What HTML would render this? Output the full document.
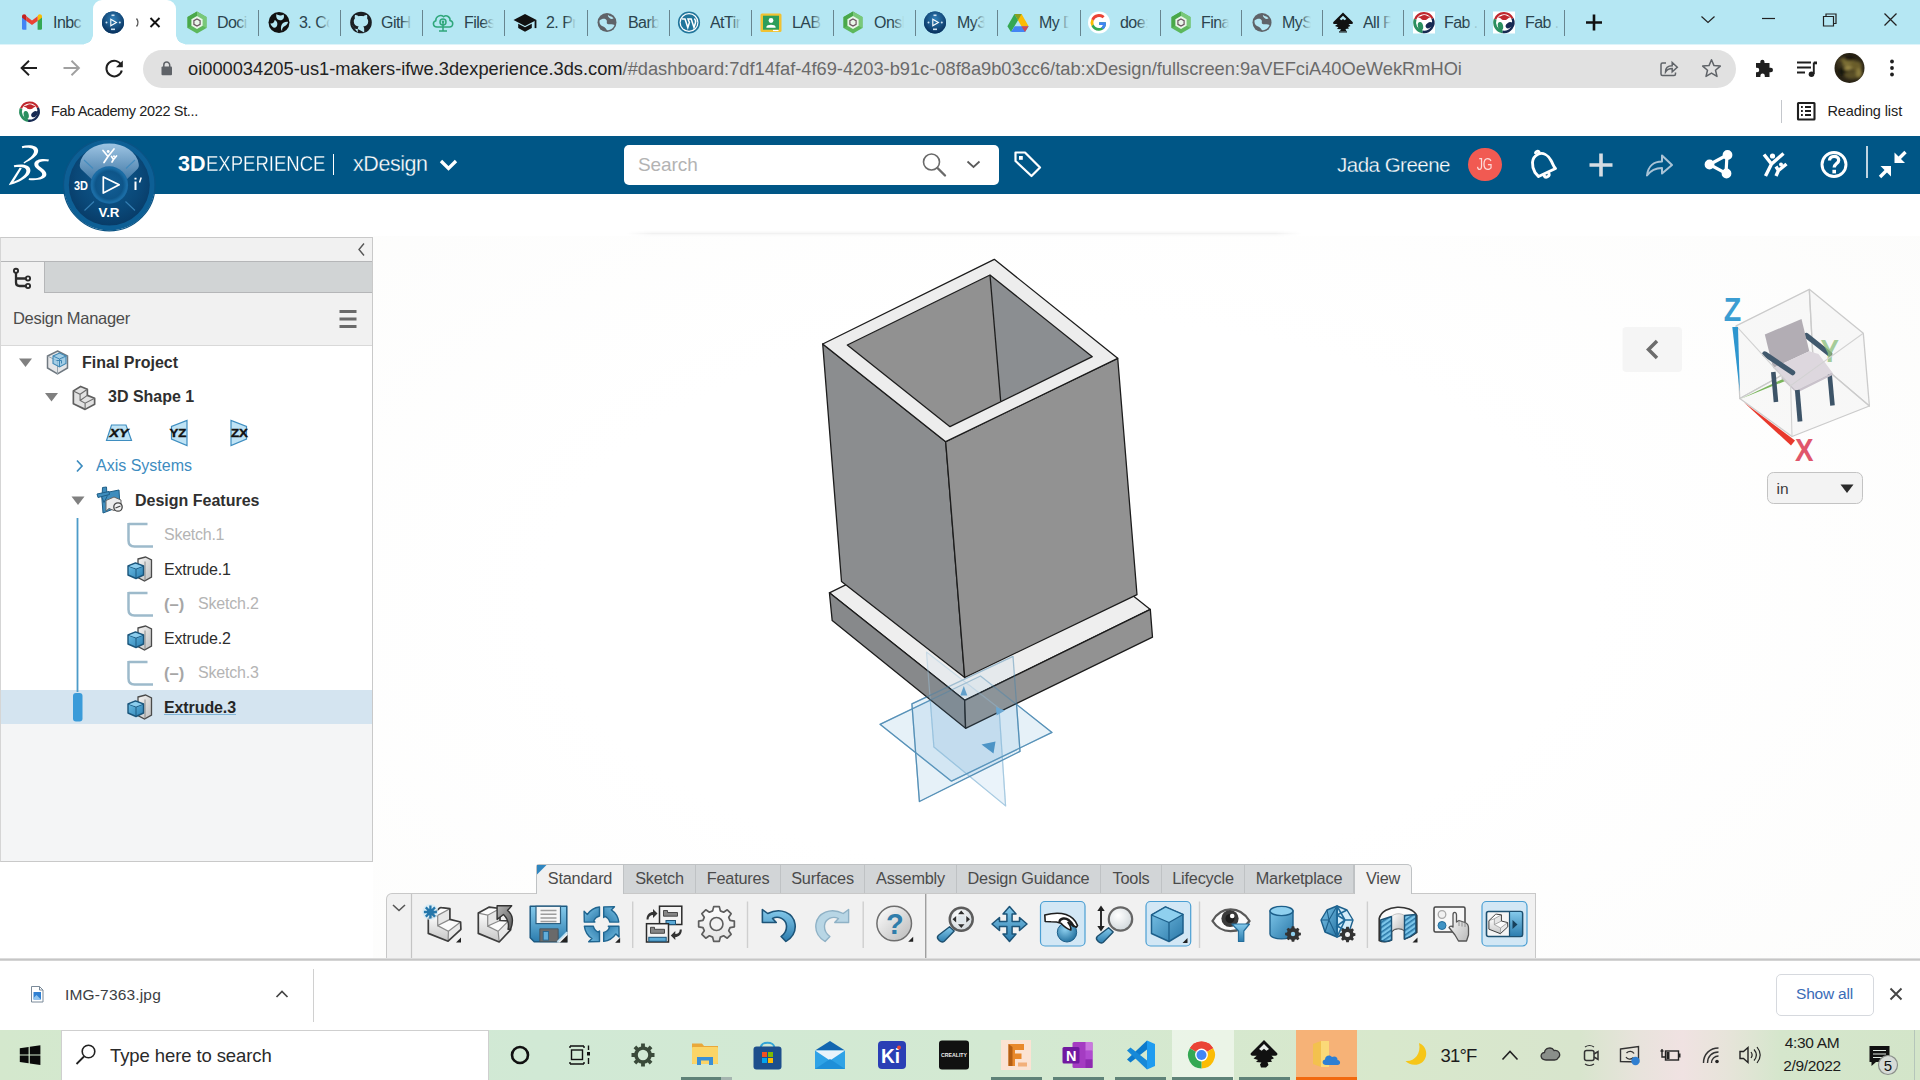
<!DOCTYPE html>
<html>
<head>
<meta charset="utf-8">
<title>3DEXPERIENCE xDesign</title>
<style>
*{box-sizing:border-box;margin:0;padding:0}
html,body{width:1920px;height:1080px;overflow:hidden;background:#fff;font-family:"Liberation Sans",sans-serif;}
body{position:relative}
.abs{position:absolute}
svg{position:absolute;overflow:visible}
/* ---------- chrome tab strip ---------- */
#tabstrip{position:absolute;left:0;top:0;width:1920px;height:44px;background:#b5e7f3}
#activetab{position:absolute;left:93px;top:0;width:83px;height:44px;background:#fff;border-radius:9px 9px 0 0}
#activetab:before,#activetab:after{content:"";position:absolute;bottom:0;width:9px;height:9px}
#activetab:before{left:-9px;background:radial-gradient(circle at 0 0,rgba(255,255,255,0) 8.5px,#fff 9px)}
#activetab:after{right:-9px;background:radial-gradient(circle at 100% 0,rgba(255,255,255,0) 8.5px,#fff 9px)}
.tabt{position:absolute;top:12.5px;height:20px;font-size:16px;line-height:20px;color:#2b444e;white-space:nowrap;overflow:hidden;letter-spacing:-0.55px}
.tabt i{position:absolute;right:0;top:0;width:11px;height:20px;background:linear-gradient(90deg,rgba(180,227,241,0),#b5e7f3)}
.tsep{position:absolute;top:10px;width:1px;height:26px;background:#67858f}
/* ---------- chrome toolbar ---------- */
#toolbar{position:absolute;left:0;top:44px;width:1920px;height:48px;background:#fff}
#omni{position:absolute;left:143px;top:50px;width:1593px;height:38px;border-radius:19px;background:#e1e1e1}
#url{position:absolute;left:188px;top:56px;height:26px;line-height:26px;font-size:18.27px;color:#222;white-space:nowrap;transform-origin:0 50%}
#url span{color:#6a6a6a}
#bookbar{position:absolute;left:0;top:92px;width:1920px;height:44px;background:#fff}
.bm{position:absolute;font-size:14.5px;color:#222;white-space:nowrap;transform-origin:0 50%}
/* ---------- 3DEXPERIENCE header ---------- */
#hdr{position:absolute;left:0;top:136px;width:1920px;height:58px;background:#005686}
#brand{position:absolute;left:178px;top:150px;font-size:21.5px;line-height:28px;color:#fff;white-space:nowrap;transform-origin:0 50%}
#brand b{font-weight:bold}
#searchbox{position:absolute;left:624px;top:145px;width:375px;height:40px;border-radius:5px;background:#fff}
#searchbox span{position:absolute;left:14px;top:8px;font-size:19px;line-height:24px;color:#b3b3b3;letter-spacing:-0.1px}
#uname{position:absolute;left:1337px;top:151px;font-size:20.5px;line-height:28px;color:#fff;white-space:nowrap;letter-spacing:-0.5px;-webkit-text-stroke:0.3px #005686;transform-origin:0 50%}
#avatar{position:absolute;left:1468px;top:147.500px;width:33.500px;height:33.500px;border-radius:17px;background:#f15a52;color:rgba(255,255,255,.78);font-size:17px;line-height:34px;text-align:center;letter-spacing:-0.3px}
#avatar span{display:inline-block;transform:scaleX(.74)}
/* ---------- left panel ---------- */
#panel{position:absolute;left:0;top:237px;width:373px;height:625px;border:1px solid #c9c9c9;border-left:1px solid #d5d5d5;background:#f4f5f6}
#pcollapse{position:absolute;left:0;top:0;width:371px;height:23px;background:#f1f1f1}
#ptabs{position:absolute;left:0;top:23px;width:371px;height:32px;background:#d1d4d5;border-top:1px solid #b5b6b8;border-bottom:1px solid #b5b6b8}
#ptab1{position:absolute;left:0;top:0;width:44px;height:31px;background:#f1f1f1;border-right:1px solid #b5b6b8}
#ptitle{position:absolute;left:0;top:55px;width:371px;height:53px;background:#f1f1f1;border-bottom:1px solid #d9d9d9}
#ptitle span{position:absolute;left:12px;top:14px;font-size:16.5px;line-height:22px;color:#4c4c4c;letter-spacing:-0.3px}
#tree{position:absolute;left:0;top:108px;width:371px;height:344px;background:#fff}
#selrow{position:absolute;left:0;top:452px;width:371px;height:34px;background:#d4e4f0}
.tl{position:absolute;font-size:16px;line-height:22px;white-space:nowrap;color:#2d2d2d;transform-origin:0 50%}
.tl.b{font-weight:bold;color:#2f2f2f}
.tl.g{color:#b4b4b4}
.tl.lnk{color:#3d8cbf}
/* ---------- bottom action bar ---------- */
#abar{position:absolute;left:386px;top:893px;width:1150px;height:66px;background:#f1f1f1;border:1px solid #c8c8c8;border-bottom:none;border-radius:6px 0 0 0}
.atab{position:absolute;top:864px;height:29px;background:#d2d5d7;border:1px solid #bfc2c4;border-bottom:none;border-left:none;font-size:16.3px;line-height:27px;color:#4b4b4b;text-align:center;letter-spacing:-0.2px;white-space:nowrap}
.atab.on{background:#f1f1f1;height:30px;border-left:1px solid #bfc2c4;z-index:2}
/* ---------- download bar ---------- */
#dlbar{position:absolute;left:0;top:958px;width:1920px;height:72px;background:linear-gradient(180deg,#dcdcdc 0,#dcdcdc 1px,#c6c6c6 1px,#c6c6c6 2px,#d4d4d4 2px,#d4d4d4 3px,#fff 3px)}
/* ---------- taskbar ---------- */
#taskbar{position:absolute;left:0;top:1030px;width:1920px;height:50px;background:linear-gradient(90deg,#d4e8cd 0,#d1e9d5 28%,#d3e9d2 52%,#d8e8cc 72%,#d8e5cd 82.3%,#e8e3dc 85.4%,#f0e2e2 87.6%,#e6e4d9 90.1%,#d5e6cc 92.7%,#d3e5c9 100%)}
#tsearch{position:absolute;left:61px;top:1030px;width:428px;height:50px;background:#fff;border:1px solid #cfcfcf;border-bottom:none}
#tsearch span{position:absolute;left:48px;top:13px;font-size:18.5px;line-height:24px;color:#2a2a2a;white-space:nowrap;letter-spacing:-0.1px}
.tk{position:absolute;font-size:16px;color:#1c1c1c;white-space:nowrap}
</style>
</head>
<body>
<div class="abs" style="left:0;top:44px;width:1920px;height:1px;background:rgba(181,231,243,.45);z-index:1"></div>
<div class="abs" style="left:84px;top:44px;width:101px;height:1px;background:#fff;z-index:1"></div>
<div id="tabstrip">
<div id="activetab"></div>
<div class="tabt" style="left:53px;width:31px">Inbc<i></i></div>
<div class="tabt" style="left:217px;width:31px">Doci<i></i></div>
<div class="tabt" style="left:299px;width:31px">3. Cc<i></i></div>
<div class="tabt" style="left:381px;width:31px">GitH<i></i></div>
<div class="tabt" style="left:464px;width:30px">Files<i></i></div>
<div class="tabt" style="left:546px;width:30px">2. Pr<i></i></div>
<div class="tabt" style="left:628px;width:31px">Barb<i></i></div>
<div class="tabt" style="left:710px;width:31px">AtTir<i></i></div>
<div class="tabt" style="left:792px;width:30px">LAB:<i></i></div>
<div class="tabt" style="left:874px;width:30px">Onsl<i></i></div>
<div class="tabt" style="left:957px;width:28px">My3<i></i></div>
<div class="tabt" style="left:1039px;width:30px">My D<i></i></div>
<div class="tabt" style="left:1120px;width:28px">doe:<i></i></div>
<div class="tabt" style="left:1201px;width:28px">Final<i></i></div>
<div class="tabt" style="left:1282px;width:29px">MyS<i></i></div>
<div class="tabt" style="left:1363px;width:28px">All P<i></i></div>
<div class="tabt" style="left:1444px;width:34px">Fab .<i></i></div>
<div class="tabt" style="left:1525px;width:34px">Fab .<i></i></div>
<div class="tsep" style="left:258px"></div>
<div class="tsep" style="left:340px"></div>
<div class="tsep" style="left:422px"></div>
<div class="tsep" style="left:504px"></div>
<div class="tsep" style="left:587px"></div>
<div class="tsep" style="left:669px"></div>
<div class="tsep" style="left:751px"></div>
<div class="tsep" style="left:833px"></div>
<div class="tsep" style="left:915px"></div>
<div class="tsep" style="left:997px"></div>
<div class="tsep" style="left:1080px"></div>
<div class="tsep" style="left:1160px"></div>
<div class="tsep" style="left:1241px"></div>
<div class="tsep" style="left:1322px"></div>
<div class="tsep" style="left:1403px"></div>
<div class="tsep" style="left:1484px"></div>
<div class="tsep" style="left:1564px"></div>
<svg width="1920" height="44" viewBox="0 0 1920 44" style="left:0;top:0"><defs><radialGradient id="cg" cx="50%" cy="35%" r="65%"><stop offset="0" stop-color="#2f7fb8"/><stop offset="1" stop-color="#08305c"/></radialGradient></defs>
<g transform="translate(22,14)"><svg x="0" y="0" width="20" height="16" viewBox="0 0 20 16"><path d="M0 2.2 V14.5 a1.3 1.3 0 0 0 1.3 1.3 H4.4 V6.2 Z" fill="#4285f4"/><path d="M20 2.2 V14.5 a1.3 1.3 0 0 1 -1.3 1.3 H15.6 V6.2 Z" fill="#34a853"/><path d="M15.6 2.3 L15.6 6.9 L20 3.6 V2.6 C20 0.5 17.8 -0.4 16.3 0.8 Z" fill="#fbbc04"/><path d="M4.4 6.9 V2.3 L10 6.5 L15.6 2.3 V6.9 L10 11.1 Z" fill="#ea4335"/><path d="M0 2.6 V3.6 L4.4 6.9 V2.3 L3.7 0.8 C2.2 -0.4 0 0.5 0 2.6 Z" fill="#c5221f"/></svg></g>
<g transform="translate(113,22.5)"><circle r="11" fill="#0a4f86"/><circle r="11" fill="url(#cg)"/><path d="M-2.2 -3.2 L3.4 0 L-2.2 3.2 Z" fill="none" stroke="#fff" stroke-width="1.1"/><circle cx="-6.5" cy="0" r="1" fill="#cfe3f2"/><circle cx="6.8" cy="0" r="1" fill="#cfe3f2"/><rect x="-2" y="6" width="4" height="1.6" fill="#cfe3f2"/><rect x="-1.5" y="-8" width="3" height="1.6" fill="#cfe3f2"/></g>
<g transform="translate(197,22.5)"><path d="M0 -11 L9.5 -5.5 V5.5 L0 11 L-9.5 5.5 V-5.5 Z" fill="#5cb85c"/><path d="M0 -11 L9.5 -5.5 V5.5 L5 3 V-3 L0 -6 Z" fill="#79c879"/><path d="M-9.5 -5.5 L0 -11 L0 -6 L-5 -3 V3 L-9.5 5.5 Z" fill="#4aa84a"/><path d="M0 -6.5 L5.6 -3.2 V3.2 L0 6.5 L-5.6 3.2 V-3.2 Z" fill="#e9f6ea"/><path d="M0 -3.6 L3.1 -1.8 V1.8 L0 3.6 L-3.1 1.8 V-1.8 Z" fill="#e9f6ea" stroke="#6b5560" stroke-width="1.2"/></g>
<g transform="translate(279,22.5)"><circle r="10.5" fill="#111"/><path d="M-2.5 -8.5 C0 -6.5 2.5 -7 4.5 -8 C6 -5 4 -2 1 -2.2 C-1.5 -2.4 -3.5 -5 -2.5 -8.5Z" fill="#b5e7f3"/><path d="M-8.7 1 C-6 1.5 -4.6 -0.5 -4.3 -2.6 C-1.5 -1.5 -0.8 2 -2.6 4.2 C-4.3 6.2 -7.2 5 -8.7 1Z" fill="#b5e7f3"/><path d="M3.2 8.6 C2.6 6 4 4.4 6 3.4 C7.6 2.6 8.8 1 9 -0.6 C6 -1 3 0.6 2.2 3.4 C1.6 5.4 2 7.4 3.2 8.6Z" fill="#b5e7f3"/></g>
<g transform="translate(361,22.5)"><circle r="10.8" fill="#1b1f23"/><path d="M-3.2 10 V6.4 C-6.5 7.2 -7.2 4.8 -7.2 4.8 C-7.8 3.4 -8.6 3 -8.6 3 M-3.2 6.4 C-3.2 5 -2.6 4.4 -2.2 4 C-5.4 3.6 -7.2 2.2 -7.2 -1 C-7.2 -2.4 -6.8 -3.4 -6 -4.2 C-6.2 -4.6 -6.6 -5.8 -5.9 -7.4 C-5.9 -7.4 -4.7 -7.8 -2.4 -6.2 C-0.8 -6.6 0.8 -6.6 2.4 -6.2 C4.7 -7.8 5.9 -7.4 5.9 -7.4 C6.6 -5.8 6.2 -4.6 6 -4.2 C6.8 -3.4 7.2 -2.4 7.2 -1 C7.2 2.2 5.4 3.6 2.2 4 C2.8 4.5 3.2 5.4 3.2 6.6 V10 Z" fill="#b5e7f3"/></g>
<g transform="translate(443,22.5)" fill="none" stroke="#2fa77b" stroke-width="1.5"><path d="M-6 4.5 C-10 4.5 -11 -0.5 -7.2 -1.8 C-7.5 -6 -2.5 -8.5 0.6 -5.8 C3.5 -8 7.6 -5.4 7 -2 C11 -1.2 10.5 4.5 6.5 4.5 Z"/><circle cx="0" cy="-0.5" r="3" /><path d="M0 -0.5 V4.5 M0 4.5 V8 M-4 8.5 H4" /><circle cx="0" cy="-0.8" r="1.3" fill="#2fa77b" stroke="none"/></g>
<g transform="translate(525,22.5)" fill="#111"><path d="M0 -8.5 L11.5 -2.6 L0 3.4 L-11.5 -2.6 Z"/><path d="M-6.8 1.2 V5.6 L0 9.2 L6.8 5.6 V1.2 L0 4.8 Z"/><rect x="9.6" y="-2.4" width="1.8" height="8"/></g>
<g transform="translate(607,22.5)"><circle r="9.5" fill="#5f6368"/><path d="M-7.5 -2 C-5 -4 -2 -4.5 -0.5 -2.5 C0.5 -1 -1 0.5 0.5 1.5 C2.5 2.5 5 1 7.5 2.5 C6.5 6 3 7.8 0 7.8 C-1.5 5 -3.5 4 -5 3.5 C-7 2.5 -7.8 0 -7.5 -2 Z" fill="#b5e7f3"/><path d="M1 -7.6 C3 -6 5.5 -6.5 6.5 -4 C5 -3.2 3.5 -3.5 2.5 -4.5 C1.5 -5.5 0.5 -6.5 1 -7.6Z" fill="#b5e7f3"/></g>
<g transform="translate(689,22.5)"><circle r="10.3" fill="#fff" stroke="#21759b" stroke-width="1.6"/><circle r="8.3" fill="#21759b"/><path d="M-7 -3.5 H-4 L-1.2 5 L0.4 0 L-1 -3.5 H2.2 L5 5 L6.4 0.5 C7 -1.5 6.2 -3 5.4 -4" fill="none" stroke="#fff" stroke-width="1.5"/></g>
<g transform="translate(771,22.5)"><rect x="-10.5" y="-9" width="21" height="18.5" rx="1.5" fill="#f1c232"/><rect x="-8" y="-6.8" width="16" height="14" fill="#2e9e5a"/><circle cx="0" cy="-2" r="2.4" fill="#fff"/><path d="M-4.6 4.6 C-4.6 1.6 4.6 1.6 4.6 4.6 V5.2 H-4.6Z" fill="#fff"/><rect x="2" y="7.4" width="5.5" height="1.2" fill="#fff"/></g>
<g transform="translate(853,22.5)"><path d="M0 -11 L9.5 -5.5 V5.5 L0 11 L-9.5 5.5 V-5.5 Z" fill="#5cb85c"/><path d="M0 -11 L9.5 -5.5 V5.5 L5 3 V-3 L0 -6 Z" fill="#79c879"/><path d="M-9.5 -5.5 L0 -11 L0 -6 L-5 -3 V3 L-9.5 5.5 Z" fill="#4aa84a"/><path d="M0 -6.5 L5.6 -3.2 V3.2 L0 6.5 L-5.6 3.2 V-3.2 Z" fill="#e9f6ea"/><path d="M0 -3.6 L3.1 -1.8 V1.8 L0 3.6 L-3.1 1.8 V-1.8 Z" fill="#e9f6ea" stroke="#6b5560" stroke-width="1.2"/></g>
<g transform="translate(935,22.5)"><circle r="11" fill="#0a4f86"/><circle r="11" fill="url(#cg)"/><path d="M-2.2 -3.2 L3.4 0 L-2.2 3.2 Z" fill="none" stroke="#fff" stroke-width="1.1"/><circle cx="-6.5" cy="0" r="1" fill="#cfe3f2"/><circle cx="6.8" cy="0" r="1" fill="#cfe3f2"/><rect x="-2" y="6" width="4" height="1.6" fill="#cfe3f2"/><rect x="-1.5" y="-8" width="3" height="1.6" fill="#cfe3f2"/></g>
<g transform="translate(1018,23)"><path d="M-3.6 -9 H3.6 L10.6 3.2 H3.4 Z" fill="#fbbc04"/><path d="M-3.6 -9 L0 -2.8 L-7 9 L-10.6 3.2 Z" fill="#34a853"/><path d="M-7 9 L-3.4 3.2 H10.6 L7 9 Z" fill="#4285f4"/><path d="M3.4 3.2 H10.6 L7 9Z" fill="#ea4335" opacity=".85"/><path d="M-3.6 -9 L0 -2.8 L3.6 -9Z" fill="#188038" opacity=".5"/></g>
<g transform="translate(1099,22.5)"><circle r="11" fill="#fff"/><path d="M6.8 -0.2 H0.2 V2.4 H4 C3.4 4.6 1.8 5.6 0 5.6 A5.6 5.6 0 0 1 -5.3 1.8 L-7.6 3.5 A8.2 8.2 0 0 0 0 8.2 C4.6 8.2 7.6 4.8 6.8 -0.2Z" fill="#34a853"/><path d="M6.8 -0.2 H0.2 V2.4 H4 C3.7 3.6 3 4.4 2.2 5 L4.4 6.8 C6.4 5 7.3 2.5 6.8 -0.2Z" fill="#4285f4"/><path d="M-5.3 1.8 A5.6 5.6 0 0 1 -5.3 -1.8 L-7.6 -3.5 A8.2 8.2 0 0 0 -7.6 3.5Z" fill="#fbbc04"/><path d="M-5.3 -1.8 A5.6 5.6 0 0 1 3.6 -4.2 L5.6 -6.2 A8.2 8.2 0 0 0 -7.6 -3.5Z" fill="#ea4335"/></g>
<g transform="translate(1181,22.5)"><path d="M0 -11 L9.5 -5.5 V5.5 L0 11 L-9.5 5.5 V-5.5 Z" fill="#5cb85c"/><path d="M0 -11 L9.5 -5.5 V5.5 L5 3 V-3 L0 -6 Z" fill="#79c879"/><path d="M-9.5 -5.5 L0 -11 L0 -6 L-5 -3 V3 L-9.5 5.5 Z" fill="#4aa84a"/><path d="M0 -6.5 L5.6 -3.2 V3.2 L0 6.5 L-5.6 3.2 V-3.2 Z" fill="#e9f6ea"/><path d="M0 -3.6 L3.1 -1.8 V1.8 L0 3.6 L-3.1 1.8 V-1.8 Z" fill="#e9f6ea" stroke="#6b5560" stroke-width="1.2"/></g>
<g transform="translate(1262,22.5)"><circle r="9.5" fill="#5f6368"/><path d="M-7.5 -2 C-5 -4 -2 -4.5 -0.5 -2.5 C0.5 -1 -1 0.5 0.5 1.5 C2.5 2.5 5 1 7.5 2.5 C6.5 6 3 7.8 0 7.8 C-1.5 5 -3.5 4 -5 3.5 C-7 2.5 -7.8 0 -7.5 -2 Z" fill="#b5e7f3"/><path d="M1 -7.6 C3 -6 5.5 -6.5 6.5 -4 C5 -3.2 3.5 -3.5 2.5 -4.5 C1.5 -5.5 0.5 -6.5 1 -7.6Z" fill="#b5e7f3"/></g>
<g transform="translate(1343,22.5)" fill="#111"><path d="M0 -10 L9.6 -0.5 C10.4 0.6 9.6 1.6 8.4 1.6 H5.5 L7.5 3.4 L5 4.6 L6 6 L2.5 6.6 L3.4 8.6 H-3 L-2 6.8 L-6 6.4 L-4.6 4.8 L-8 3.6 L-5.4 1.6 H-8.4 C-9.6 1.6 -10.4 0.6 -9.6 -0.5 Z"/><path d="M-3.4 -3.4 L0 -6.8 L3.4 -3.4 L1.6 -2.2 L0 -3.6 L-1.6 -2.2Z" fill="#b5e7f3"/><path d="M-4 9.4 H4" stroke="#111" stroke-width="1.2"/></g>
<g transform="translate(1424,22.5)"><rect x="-11" y="-11" width="22" height="22" fill="#fff"/><path d="M-8.83 -3.21 A9.4 9.4 0 0 1 8.52 -3.97" fill="none" stroke="#c0272d" stroke-width="2.200"/><path d="M8.52 -3.97 A9.4 9.4 0 0 1 -1.63 9.26" fill="none" stroke="#172a52" stroke-width="2.400"/><path d="M-1.63 9.26 A9.4 9.4 0 0 1 -8.83 -3.21" fill="none" stroke="#2a8f5f" stroke-width="2.800"/><ellipse cx="0.300" cy="-5" rx="3.400" ry="2.600" fill="#c0272d"/><path d="M-6.500 -5.500 L-2 -6.500 L-2 -3.500 Z M6.500 -5.500 L3 -6.500 L3 -3.500Z" fill="#c0272d"/><ellipse cx="-3.500" cy="3.600" rx="2.600" ry="4.200" transform="rotate(-12 -3.500 3.600)" fill="#2a8f5f"/><path d="M-3.500 6 L-1 9.300 L-4.500 8.800Z" fill="#2a8f5f"/><ellipse cx="5" cy="2.700" rx="3.700" ry="2.500" transform="rotate(-38 5 2.700)" fill="#172a52"/><path d="M7 0.500 L9.300 -2 L8.800 2Z" fill="#172a52"/></g>
<g transform="translate(1504,22.5)"><rect x="-11" y="-11" width="22" height="22" fill="#fff"/><path d="M-8.83 -3.21 A9.4 9.4 0 0 1 8.52 -3.97" fill="none" stroke="#c0272d" stroke-width="2.200"/><path d="M8.52 -3.97 A9.4 9.4 0 0 1 -1.63 9.26" fill="none" stroke="#172a52" stroke-width="2.400"/><path d="M-1.63 9.26 A9.4 9.4 0 0 1 -8.83 -3.21" fill="none" stroke="#2a8f5f" stroke-width="2.800"/><ellipse cx="0.300" cy="-5" rx="3.400" ry="2.600" fill="#c0272d"/><path d="M-6.500 -5.500 L-2 -6.500 L-2 -3.500 Z M6.500 -5.500 L3 -6.500 L3 -3.500Z" fill="#c0272d"/><ellipse cx="-3.500" cy="3.600" rx="2.600" ry="4.200" transform="rotate(-12 -3.500 3.600)" fill="#2a8f5f"/><path d="M-3.500 6 L-1 9.300 L-4.500 8.800Z" fill="#2a8f5f"/><ellipse cx="5" cy="2.700" rx="3.700" ry="2.500" transform="rotate(-38 5 2.700)" fill="#172a52"/><path d="M7 0.500 L9.300 -2 L8.800 2Z" fill="#172a52"/></g>
<path d="M136.5 18.5 Q139.5 22.5 136.5 26.5" fill="none" stroke="#555" stroke-width="1.3"/>
<path d="M150.5 18 L159.5 27 M159.5 18 L150.5 27" stroke="#111" stroke-width="1.9" fill="none"/>
<path d="M1586 22.5 H1602 M1594 14.5 V30.5" stroke="#111" stroke-width="2.6" fill="none"/>
<path d="M1701.5 16.5 L1708 22.5 L1714.5 16.5" stroke="#222" stroke-width="1.2" fill="none"/>
<path d="M1762 18.5 H1775" stroke="#222" stroke-width="1.2" fill="none"/>
<path d="M1823.5 16.5 H1833.5 V26 H1823.5 Z M1826 16.5 V14 H1836 V23.5 H1833.5" stroke="#222" stroke-width="1.2" fill="none"/>
<path d="M1884.500 13.5 L1896.5 25.5 M1896.5 13.5 L1884.5 25.5" stroke="#222" stroke-width="1.3" fill="none"/>
</svg></div>
<div id="toolbar"></div>
<div id="bookbar"></div>
<div id="omni"></div>
<div id="url">oi000034205-us1-makers-ifwe.3dexperience.3ds.com<span>/#dashboard:7df14faf-4f69-4203-b91c-08f8a9b03cc6/tab:xDesign/fullscreen:9aVEFciA40OeWekRmHOi</span></div>
<div class="bm" id="bm1" style="left:51px;top:101px;line-height:20px;letter-spacing:-0.36px">Fab Academy 2022 St...</div>
<div class="bm" id="bm2" style="left:1827.5px;top:101px;line-height:20px;letter-spacing:-0.1px">Reading list</div>
<svg width="1920" height="92" viewBox="0 44 1920 92" style="left:0;top:44px">
 <!-- back -->
 <path d="M37 68 H22 M29 60.8 L21.6 68 L29 75.2" fill="none" stroke="#1f1f1f" stroke-width="1.9"/>
 <!-- forward -->
 <path d="M63.500 68 H78.500 M71.500 60.800 L78.900 68 L71.500 75.200" fill="none" stroke="#a0a0a0" stroke-width="1.9"/>
 <!-- reload -->
 <path d="M121.3 65.200 A7.800 7.800 0 1 0 121.800 70.500" fill="none" stroke="#1f1f1f" stroke-width="2"/>
 <path d="M122.800 60.500 V67.300 H116 Z" fill="#1f1f1f"/>
 <!-- lock -->
 <rect x="161.500" y="66.500" width="10.500" height="8.800" rx="1" fill="#5f6368"/>
 <path d="M163.800 67 V65 A2.950 2.950 0 0 1 169.700 65 V67" fill="none" stroke="#5f6368" stroke-width="1.5"/>
 <!-- share -->
 <g fill="none" stroke="#5f6368" stroke-width="1.5">
  <path d="M1666 63 H1662.500 A1.500 1.500 0 0 0 1661 64.500 V74 A1.500 1.500 0 0 0 1662.500 75.500 H1674 A1.500 1.500 0 0 0 1675.500 74 V72.500"/>
  <path d="M1665.500 72 C1665.500 67.500 1668.500 65.800 1672.200 65.800 V62.500 L1677.300 67.200 L1672.200 71.800 V68.600 C1669.500 68.600 1667.200 69.300 1665.500 72 Z"/>
 </g>
 <!-- star -->
 <path d="M1711.500 59.800 L1714 65.600 L1720.300 66.100 L1715.500 70.200 L1717 76.400 L1711.500 73.100 L1706 76.400 L1707.500 70.200 L1702.700 66.100 L1709 65.600 Z" fill="none" stroke="#5f6368" stroke-width="1.5" stroke-linejoin="round"/>
 <!-- puzzle -->
 <path d="M1756 63 H1760.300 V61.800 A2.100 2.100 0 0 1 1764.500 61.800 V63 H1769.500 V67.800 H1770.800 A2.200 2.200 0 0 1 1770.800 72.200 H1769.500 V77 H1764.800 V75.800 A2.200 2.200 0 0 0 1760.400 75.800 V77 H1756 V72.300 H1757 A2.250 2.250 0 0 0 1757 67.800 H1756 Z" fill="#1f1f1f"/>
 <!-- media control -->
 <g fill="none" stroke="#1f1f1f" stroke-width="1.900">
  <path d="M1797 62.500 H1811 M1797 67.500 H1811 M1797 72.500 H1805"/>
  <path d="M1813.800 62.500 V74"/>
 </g>
 <circle cx="1811.500" cy="74.200" r="2.800" fill="#1f1f1f"/>
 <path d="M1813.800 61.500 H1817 V64.300 H1813.800Z" fill="#1f1f1f"/>
 <!-- avatar -->
 <defs><clipPath id="avc"><circle cx="1849.500" cy="68" r="15"/></clipPath><filter id="avb" x="-20%" y="-20%" width="140%" height="140%"><feGaussianBlur stdDeviation="1.600"/></filter></defs>
 <circle cx="1849.500" cy="68" r="15" fill="#2a2416"/>
 <g clip-path="url(#avc)" filter="url(#avb)">
  <ellipse cx="1846" cy="62" rx="9" ry="4" fill="#7d6f35"/>
  <ellipse cx="1856" cy="66" rx="6" ry="5" fill="#6a5d2c"/>
  <ellipse cx="1843" cy="72" rx="5" ry="4" fill="#14120c"/>
  <ellipse cx="1852" cy="75" rx="8" ry="4" fill="#5a4f27"/>
  <ellipse cx="1850" cy="58" rx="6" ry="3" fill="#1b180f"/>
  <ellipse cx="1859" cy="73" rx="3" ry="5" fill="#8a7b3c"/>
  <ellipse cx="1848" cy="68" rx="4" ry="2" fill="#a08f4a"/>
  <ellipse cx="1840" cy="64" rx="3" ry="4" fill="#3a331c"/>
 </g>
 <!-- menu dots -->
 <circle cx="1892" cy="61.500" r="1.900" fill="#1f1f1f"/><circle cx="1892" cy="68" r="1.900" fill="#1f1f1f"/><circle cx="1892" cy="74.500" r="1.900" fill="#1f1f1f"/>
 <!-- bookmark fab icon -->
 <g transform="translate(29.600,111.600) scale(.970)"><circle r="10" fill="#fff"/><path d="M-8.83 -3.21 A9.4 9.4 0 0 1 8.52 -3.97" fill="none" stroke="#c0272d" stroke-width="2.200"/><path d="M8.52 -3.97 A9.4 9.4 0 0 1 -1.63 9.26" fill="none" stroke="#172a52" stroke-width="2.400"/><path d="M-1.63 9.26 A9.4 9.4 0 0 1 -8.83 -3.21" fill="none" stroke="#2a8f5f" stroke-width="2.800"/><ellipse cx="0.300" cy="-5" rx="3.400" ry="2.600" fill="#c0272d"/><path d="M-6.500 -5.500 L-2 -6.500 L-2 -3.500 Z M6.500 -5.500 L3 -6.500 L3 -3.500Z" fill="#c0272d"/><ellipse cx="-3.500" cy="3.600" rx="2.600" ry="4.200" transform="rotate(-12 -3.500 3.600)" fill="#2a8f5f"/><path d="M-3.500 6 L-1 9.300 L-4.500 8.800Z" fill="#2a8f5f"/><ellipse cx="5" cy="2.700" rx="3.700" ry="2.500" transform="rotate(-38 5 2.700)" fill="#172a52"/><path d="M7 0.500 L9.300 -2 L8.800 2Z" fill="#172a52"/></g>
 <!-- reading list -->
 <path d="M1781.500 100 V123" stroke="#c4c7cc" stroke-width="1"/>
 <rect x="1798" y="103" width="16.500" height="16.500" rx=".5" fill="none" stroke="#1f1f1f" stroke-width="2.100"/>
 <path d="M1801 107 H1802.800 M1805 107 H1811 M1801 111 H1802.800 M1805 111 H1811 M1801 115 H1802.800 M1805 115 H1811" stroke="#1f1f1f" stroke-width="2"/>
</svg>

<div class="abs" style="left:0;top:194px;width:1920px;height:766px;background:#fff"></div>
<div class="abs" style="left:373px;top:236px;width:1547px;height:722px;background:radial-gradient(ellipse 75% 85% at 45% 50%,#ffffff 45%,#fcfcfb 100%)"></div>
<div class="abs" style="left:625px;top:230px;width:678px;height:7px;background:linear-gradient(90deg,rgba(0,0,0,0),rgba(0,0,0,1) 4%,rgba(0,0,0,1) 96%,rgba(0,0,0,0));opacity:.05;-webkit-mask-image:linear-gradient(180deg,rgba(0,0,0,0),rgba(0,0,0,.5) 35%,#000 50%,rgba(0,0,0,.5) 65%,rgba(0,0,0,0));mask-image:linear-gradient(180deg,rgba(0,0,0,0),rgba(0,0,0,.5) 35%,#000 50%,rgba(0,0,0,.5) 65%,rgba(0,0,0,0))"></div>
<svg width="1547" height="764" viewBox="373 194 1547 764" style="left:373px;top:194px">
 <defs><g id="rplanes" stroke-linejoin="round">
  <path d="M926.500 652 L999 708.300 L1005.600 805.900 L933.900 747 Z" fill="#5b9fd0" fill-opacity=".11" stroke="#9cc4de" stroke-width="1.200"/>
  <path d="M880 724.300 L980.500 676 L1052 732.400 L951.500 781.200 Z" fill="#5b9fd0" fill-opacity=".13" stroke="#3f82ae" stroke-width="1.300"/>
  <path d="M1013 656.400 L911.900 703.900 L919.400 801.500 L1020 751.400 Z" fill="#5b9fd0" fill-opacity=".13" stroke="#3f82ae" stroke-width="1.300"/>
 </g></defs>
 <use href="#rplanes" opacity=".78"/>
 <g stroke="#1c1c1c" stroke-width="1.300" stroke-linejoin="round">
  <!-- base -->
  <path d="M829.400 592.800 L1015 501.900 L1150.300 609.400 L964.700 700.300 Z" fill="#eeeeee"/>
  <path d="M829.400 592.800 L964.700 700.300 L965.600 728.300 L832.200 620.600 Z" fill="#87898b"/>
  <path d="M964.700 700.300 L1150.300 609.400 L1152.500 637.200 L965.600 728.300 Z" fill="#929292"/>
  <!-- inner faces -->
  <path d="M847.300 345 L990 275 L1000.700 401.200 L950 426.700 Z" fill="#919191" stroke="none"/>
  <path d="M990 275 L1092.300 356.700 L1000.700 401.200 Z" fill="#8b8e91" stroke="none"/>
  <path d="M990 275 L1000.700 401.200" fill="none"/>
  <!-- walls -->
  <path d="M822.700 344 L945.700 441.700 L964.700 677.500 L841.500 581.500 Z" fill="#8b8d8f"/>
  <path d="M945.700 441.700 L1117.700 358.300 L1137 594.700 L964.700 677.500 Z" fill="#929292"/>
  <!-- top rim -->
  <path d="M994.300 259.300 L1117.700 358.300 L945.700 441.700 L822.700 344 Z M990 275 L847.300 345 L950 426.700 L1092.300 356.700 Z" fill="#ededed" fill-rule="evenodd"/>
 </g>
 <!-- reference planes -->
 <use href="#rplanes" opacity=".45"/>
 <g>
  <path d="M963.800 686 L967.300 695.500 L960.300 695.500 Z" fill="#4d94c6" opacity=".85"/>
  <path d="M1005 710.500 L996 707 L996.500 715.500 Z" fill="#6aa7d2"/>
  <path d="M981.500 744.500 L995.500 741.500 L993.500 753.500 Z" fill="#4d94c6"/>
 </g>
 <!-- nav chevron button -->
 <rect x="1622.500" y="327" width="59.500" height="45" rx="4" fill="#f5f5f5"/>
 <path d="M1657 341 L1648.500 349.500 L1657 358" fill="none" stroke="#6c6c6c" stroke-width="3.500"/>
 <!-- view cube -->
 <g fill="#f2f2f2" fill-opacity=".55" stroke="#cbcbcb" stroke-width="1.300" stroke-linejoin="round">
  <path d="M1809.300 289.300 L1736.100 325.900 L1739.800 398.500 L1813 358 Z"/>
  <path d="M1809.300 289.300 L1863.300 333.300 L1869.400 406 L1813 358 Z"/>
  <path d="M1739.800 398.500 L1813 358 L1869.400 406 L1792 436.500 Z"/>
 </g>
 <!-- Y axis + label behind chair -->
 <path d="M1741 398.800 L1786 377.500 L1787.200 380.200 Z" fill="#7ab55c"/>
 <!-- chair -->
 <g>
  <path d="M1806.500 335.600 L1829.600 354" stroke="#41596d" stroke-width="5.300" stroke-linecap="round" fill="none"/>
  <path d="M1829.600 374 L1832.500 405.500" stroke="#3d5468" stroke-width="4.600" fill="none"/>
  <path d="M1773.300 372 L1776 402" stroke="#3d5468" stroke-width="4.600" fill="none"/>
  <path d="M1764.800 334.600 L1801.500 318.900 L1809.300 351.300 L1773.100 368 Z" fill="#b2adb4"/>
  <path d="M1773.100 368 L1809.300 351.300 L1818.500 354 L1832.400 372.600 L1796.300 390.300 L1781.500 376 Z" fill="#ddd7de"/>
  <path d="M1781.500 376 L1796.300 390.300 L1832.400 372.600 L1832.600 375 L1796.500 393 L1781.500 378.500 Z" fill="#c9c2cb"/>
  <path d="M1797.300 390 L1800 421.500" stroke="#3d5468" stroke-width="4.800" fill="none"/>
  <path d="M1764.800 354 L1792.600 372.600" stroke="#41596d" stroke-width="5.300" stroke-linecap="round" fill="none"/>
 </g>
 <text x="1820.500" y="362" font-family="Liberation Sans" font-weight="bold" font-size="31" fill="#8fc07f" fill-opacity=".8" textLength="18.500" lengthAdjust="spacingAndGlyphs">Y</text>
 <!-- front cube edges over chair -->
 <g fill="none" stroke="#d2d2d2" stroke-width="1.100">
  <path d="M1736.100 325.900 L1790.700 385.600 L1863.300 333.300 M1790.700 385.600 L1792 436.500"/>
 </g>
 <!-- axes -->
 <path d="M1732.300 327 L1738 327 L1739.800 392 Z" fill="#2e96cf"/>
 <path d="M1744 402.500 L1795 440.500 L1791 445.500 Z" fill="#e8392c"/>
 <text x="1723.800" y="320.700" font-family="Liberation Sans" font-weight="bold" font-size="33" fill="#3b9dd2" textLength="17.500" lengthAdjust="spacingAndGlyphs">Z</text>
 <text x="1795" y="460.500" font-family="Liberation Sans" font-weight="bold" font-size="32" fill="#e0566b" textLength="18.500" lengthAdjust="spacingAndGlyphs">X</text>
 <!-- unit dropdown -->
 <rect x="1767.500" y="472.500" width="95" height="31" rx="6" fill="#f3f3f3" stroke="#c3c3c3" stroke-width="1"/>
 <text x="1776.500" y="493.500" font-family="Liberation Sans" font-size="15.500" fill="#3a3a3a">in</text>
 <path d="M1840.500 484.500 H1853.500 L1847 493 Z" fill="#2b2b2b"/>
</svg>

<div id="hdr"></div>
<div id="brand"><b id="b3d">3D</b><span id="bexp" style="display:inline-block;transform:scaleX(.862);transform-origin:0 50%;-webkit-text-stroke:0.3px #005686;margin-left:1px">EXPERIENCE</span></div>
<div class="abs" id="bpipe" style="left:333.2px;top:154px;width:1.3px;height:20.5px;background:#fff"></div>
<div class="abs" id="bapp" style="left:353px;top:150px;font-size:21.5px;line-height:28px;color:#fff;white-space:nowrap;letter-spacing:-0.45px;-webkit-text-stroke:0.3px #005686">xDesign</div>
<div id="searchbox"><span id="sph">Search</span></div>
<div id="uname">Jada Greene</div>
<div id="avatar"><span>JG</span></div>
<svg width="1920" height="110" viewBox="0 130 1920 110" style="left:0;top:130px">
 <defs>
  <radialGradient id="cmpg" cx="50%" cy="42%" r="58%"><stop offset="0" stop-color="#0f5a8f"/><stop offset=".7" stop-color="#0a4878"/><stop offset="1" stop-color="#083c68"/></radialGradient>
  <linearGradient id="cmptop" x1="0" y1="0" x2="0" y2="1"><stop offset="0" stop-color="#9dc4e3"/><stop offset="1" stop-color="#4279a6"/></linearGradient>
  <radialGradient id="cmpc" cx="50%" cy="50%" r="50%"><stop offset="0" stop-color="#135f96"/><stop offset=".8" stop-color="#0e5589"/><stop offset="1" stop-color="#1a6da5"/></radialGradient>
 </defs>
 <!-- DS logo -->
 <g fill="#fff">
  <path d="M21.800 146.300 C28.500 144.300 38.200 145.200 38.200 150.800 C38.200 155.800 31 160.300 24.200 163.400 L23.500 162.400 C29 159 34 155 34 151.300 C34 147.600 27.500 147.300 22.300 148.200 Z"/>
  <path d="M13.800 165.200 C20.500 163.800 30.200 164 30.400 170.300 C30.600 177 17.500 183.300 8.800 185.300 L9.600 183.500 L19.800 167.600 L21.800 168.300 L13.500 181.700 C19.500 179.600 26.500 175 26.400 170.800 C26.300 167 20 166.600 14.300 167.300 Z"/>
  <path d="M49 159.500 L48.300 161.600 C44 160.800 38.800 161 38.300 164 C37.800 167.200 46.800 169.300 46.400 174.600 C46 179.600 37 180.800 28.600 180 L29 178.200 C35 178.600 42 178 42.200 174.400 C42.400 170.800 34 168.800 34.300 164 C34.600 159 43 158.300 49 159.500 Z"/>
 </g>
 <!-- compass -->
 <circle cx="109.300" cy="185" r="45.500" fill="#0d5f95"/>
 <circle cx="109.300" cy="185" r="45.800" fill="none" stroke="#0a5384" stroke-width="1.200"/>
 <circle cx="109.300" cy="185" r="40.500" fill="url(#cmpg)"/>
 <!-- top highlighted quadrant -->
 <path d="M93 180.500 L81.500 169.500 Q79 167 80 163.500 A29.500 22.500 0 0 1 138.600 163.500 Q139.600 167 137 169.500 L125.600 180.500 Z" fill="url(#cmptop)"/>
 <!-- quadrant lines -->
 <path d="M84 160 L93 168.500 M135 160 L126 168.500 M84.500 210.500 L94 201.500 M135 210.500 L125.500 201.500" stroke="#3c88bd" stroke-width="1.100" fill="none" opacity=".85"/>
 <!-- center -->
 <circle cx="109.300" cy="185" r="18.800" fill="#1b6ca5"/>
 <circle cx="109.300" cy="185" r="17.200" fill="url(#cmpc)"/>
 <path d="M103.300 176.900 L119.200 184.800 L103.300 193 Z" fill="none" stroke="#fff" stroke-width="1.700" stroke-linejoin="round"/>
 <!-- labels -->
 <text x="74" y="190" font-family="Liberation Sans" font-weight="bold" font-size="12" fill="#fff" textLength="14" lengthAdjust="spacingAndGlyphs">3D</text>
 <text x="98.500" y="217" font-family="Liberation Sans" font-weight="bold" font-size="12.500" fill="#fff" textLength="21" lengthAdjust="spacingAndGlyphs">V.R</text>
 <path d="M135.500 181.500 V190 M135.500 177.800 V179.600" stroke="#fff" stroke-width="2" fill="none"/>
 <path d="M139.500 182.500 L141.200 177.500" stroke="#fff" stroke-width="1.500" fill="none"/>
 <!-- top people icon -->
 <g stroke="#fff" stroke-width="1.700" fill="none" stroke-linecap="round">
  <path d="M103 150.500 L108 156.500 L104 162.500 M108 156.500 L114 149"/>
  <path d="M111.500 156.500 L113.500 159.500 L112 162 M113.500 159.500 L116.500 156"/>
 </g>
 <circle cx="108.200" cy="151.500" r="1.400" fill="#fff"/><circle cx="114" cy="156.300" r="1" fill="#fff"/>
 <!-- app chevron -->
 <path d="M441 161 L448.500 168.500 L456 161" fill="none" stroke="#fff" stroke-width="3.300"/>
 <!-- search magnifier + chevron -->
 <circle cx="931.500" cy="162" r="8" fill="none" stroke="#6a6a6a" stroke-width="1.600"/>
 <path d="M937.500 168 L945 175.500" stroke="#6a6a6a" stroke-width="2.400" stroke-linecap="round"/>
 <path d="M967.500 161.500 L973.500 167 L979.500 161.500" fill="none" stroke="#5a5a5a" stroke-width="1.700"/>
 <!-- tag -->
 <path d="M1015.500 152.500 H1025 L1040 167.500 L1031.500 176 L1015.500 161 Z" fill="none" stroke="#fff" stroke-width="2.200" stroke-linejoin="round"/>
 <rect x="1019" y="156" width="3.800" height="3.800" fill="#fff"/>
 <!-- bell -->
 <g fill="none" stroke="#fff" stroke-width="2.900" stroke-linejoin="round" stroke-linecap="round">
  <path d="M1535 172.500 C1531.500 166 1531 158 1537.500 154.500 C1543 151.800 1548 155 1551 160.500 C1553 164 1553.500 166.500 1555.500 168.500 L1538.500 176.500 Z"/>
  <path d="M1535.500 152.800 A2 2 0 0 1 1539 152"/>
  <path d="M1544 175.500 A2.600 2.600 0 0 0 1548.800 173.200"/>
 </g>
 <!-- plus -->
 <path d="M1589.500 165 H1612.500 M1601 153.500 V176.500" stroke="#d6dde3" stroke-width="3.600" fill="none"/>
 <!-- share arrow -->
 <path d="M1647 175.500 C1648 166 1654 161.500 1662 161.500 V155.500 L1672 165 L1662 173.500 V168 C1655.500 168 1651 170 1647 175.500 Z" fill="none" stroke="#a9c3d6" stroke-width="2" stroke-linejoin="round"/>
 <!-- network -->
 <g stroke="#fff" stroke-width="3.200" fill="#fff">
  <path d="M1709.500 164.500 L1727 155 L1726 173.500 Z" fill="none"/>
  <circle cx="1709.500" cy="164.500" r="3.300"/><circle cx="1727.500" cy="155" r="3.300"/><circle cx="1726.500" cy="173.500" r="3.300"/>
 </g>
 <!-- people Y icon -->
 <g stroke="#fff" stroke-width="3.400" fill="none" stroke-linecap="butt">
  <path d="M1764 154.500 L1771.500 164 L1765.500 176 M1771.500 164 L1783.500 153.500"/>
  <path d="M1776 166.500 L1778.500 170.500 L1776 176 M1778.500 170.500 L1786.500 164"/>
 </g>
 <circle cx="1772.500" cy="156" r="2.600" fill="#fff"/><circle cx="1781" cy="164.500" r="2" fill="#fff"/>
 <!-- help -->
 <circle cx="1834" cy="164.500" r="12" fill="none" stroke="#fff" stroke-width="2.900"/>
 <path d="M1829.500 160.500 C1829.500 155 1838.700 155 1838.700 160.200 C1838.700 163.500 1834.200 163.500 1834.200 167.500" fill="none" stroke="#fff" stroke-width="3.300"/>
 <rect x="1832.400" y="169.800" width="3.600" height="3.600" fill="#fff"/>
 <!-- divider -->
 <path d="M1867 146 V178" stroke="#fff" stroke-width="1.500"/>
 <!-- collapse arrows -->
 <g fill="#fff" stroke="#fff">
  <path d="M1905.500 152 L1898 159.500" fill="none" stroke-width="3.400"/><path d="M1894.500 152.500 V163 H1905 Z" stroke="none"/>
  <path d="M1880 177 L1887.500 169.500" fill="none" stroke-width="3.400"/><path d="M1891 176.500 V166 H1880.500 Z" stroke="none"/>
 </g>
</svg>

<div id="panel"><div id="pcollapse"></div><div id="ptabs"><div id="ptab1"></div></div><div id="ptitle"><span id="dmt">Design Manager</span></div><div id="tree"></div><div id="selrow"></div></div>
<div class="tl b" id="t1" style="left:82px;top:351.8px;">Final Project</div>
<div class="tl b" id="t2" style="left:108px;top:385.5px;">3D Shape 1</div>
<div class="tl lnk" id="t3" style="left:96px;top:454.5px;">Axis Systems</div>
<div class="tl b" id="t4" style="left:135px;top:490px;">Design Features</div>
<div class="tl g" id="t5" style="left:164px;top:524px;letter-spacing:-0.25px">Sketch.1</div>
<div class="tl " id="t6" style="left:164px;top:558.7px;letter-spacing:-0.2px">Extrude.1</div>
<div class="tl g b" id="t7a" style="left:164px;top:593px;color:#a6a6a6;font-size:16.5px">(–)</div>
<div class="tl g" id="t7" style="left:198px;top:593px;letter-spacing:-0.2px">Sketch.2</div>
<div class="tl " id="t8" style="left:164px;top:627.7px;letter-spacing:-0.2px">Extrude.2</div>
<div class="tl g b" id="t9a" style="left:164px;top:662px;color:#a6a6a6;font-size:16.5px">(–)</div>
<div class="tl g" id="t9" style="left:198px;top:662px;letter-spacing:-0.2px">Sketch.3</div>
<div class="tl b" id="t10" style="left:164px;top:696.5px;text-decoration:underline;text-decoration-color:#7fb4d8;text-underline-offset:1px;text-decoration-thickness:1.4px;color:#262626;letter-spacing:-0.1px">Extrude.3</div>
<svg width="373" height="630" viewBox="0 237 373 630" style="left:0;top:237px">
<defs>
<linearGradient id="cubeb" x1="0" y1="0" x2="1" y2="1"><stop offset="0" stop-color="#6fc0e6"/><stop offset="1" stop-color="#2a7fb3"/></linearGradient>
<linearGradient id="gry" x1="0" y1="0" x2="1" y2="1"><stop offset="0" stop-color="#f6f6f6"/><stop offset="1" stop-color="#bdbdbd"/></linearGradient>
<g id="extr">
 <!-- gray slab behind -->
 <path d="M-2 -10.500 L5.500 -12.500 L11.500 -9.500 V7.500 L4.500 11.500 L-2 8 Z" fill="url(#gry)" stroke="#4a4a4a" stroke-width="1.300"/>
 <path d="M5 -8 V11" stroke="#777" stroke-width="0.800" fill="none"/>
 <!-- blue cube -->
 <path d="M-12 -3.500 L-4.500 -6.500 L3.500 -3.500 V5.500 L-4 9 L-12 5.500 Z" fill="url(#cubeb)" stroke="#1b557b" stroke-width="1.400" stroke-linejoin="round"/>
 <path d="M-12 -3.500 L-4 -0.500 L3.500 -3.500 M-4 -0.500 V9" fill="none" stroke="#1d5a82" stroke-width="1"/>
 <path d="M-11 -3.300 L-4.500 -5.700 L2.300 -3.300 L-4 -1 Z" fill="#9ad6f2" opacity=".8"/>
</g>
<g id="sk">
 <path d="M-11.500 -10.500 H7.500 M-11.500 -11.500 V6 Q-11.500 12 -5.500 12 H13" fill="none" stroke="#9dbacb" stroke-width="2.500"/>
</g>
<g id="tri"><path d="M-6.500 -4 H6.500 L0 4.500 Z" fill="#808080"/></g>
</defs>
<path d="M364 243.500 L359 249.500 L364 255.500" fill="none" stroke="#555" stroke-width="1.400"/>
<g fill="none" stroke="#2b2b2b" stroke-width="2.300"><path d="M16 272.500 V282.500 Q16 286 19.500 286 H26 M16 278.500 H26"/><circle cx="16" cy="270.800" r="2.100" fill="#f1f1f1" stroke-width="1.900"/><circle cx="28" cy="278.500" r="2.100" fill="#f1f1f1" stroke-width="1.900"/><circle cx="28" cy="286" r="2.100" fill="#f1f1f1" stroke-width="1.900"/></g>
<path d="M339.500 311.500 H356.500 M339.500 319 H356.500 M339.500 326.500 H356.500" stroke="#6a6a6a" stroke-width="2.800"/>
<use href="#tri" x="25.500" y="362.500"/><use href="#tri" x="51.500" y="397"/><use href="#tri" x="78" y="500.500"/>
<g transform="translate(57.500,362.500)"><path d="M0 -11.500 L10 -6.500 V5.500 L0 11.500 L-10 5.500 V-6.500 Z" fill="#e4e6e8" stroke="#6f7880" stroke-width="1.500"/><path d="M-10 -6.500 L0 -1.500 L10 -6.500 M0 -1.500 V11.500" fill="none" stroke="#9aa5ad" stroke-width="1"/><path d="M-4.500 -6.500 L2 -9.500 L8.500 -6.500 V1 L2 4.500 L-4.500 1 Z" fill="#8fc6e6" fill-opacity=".75" stroke="#3d86b4" stroke-width="1.100"/><path d="M-4.500 -6.500 L2 -3.500 L8.500 -6.500 M2 -3.500 V4.500 M-1 -2 H4 V1" fill="none" stroke="#3d86b4" stroke-width="1"/></g>
<g transform="translate(84,396.500) scale(1.120)"><path d="M-9.500 -5 L-3 -9 L3 -6.500 V-1 L9.500 1.500 V7 L1 11.500 L-9.500 6.500 Z" fill="#e2e2e2" stroke="#5f5f5f" stroke-width="1.500" stroke-linejoin="round"/><path d="M-9.500 -5 L-3.500 -2 L3 -6.500 M-3.500 -2 V3.500 L1 6 L9.500 1.500 M1 6 V11.500 M-3.500 3.500 L3 -1" fill="none" stroke="#6e6e6e" stroke-width="1"/></g>
<g transform="translate(119,433)"><path d="M-7.500 -8 H7 L12.500 7.500 H-12.500 Z" fill="#bfe3f5" stroke="#3f8ec0" stroke-width="1.200"/><text x="-9.500" y="3.800" font-family="Liberation Sans" font-weight="bold" font-style="italic" font-size="11.500" fill="#111" stroke="#111" stroke-width=".4" textLength="19" lengthAdjust="spacingAndGlyphs">XY</text></g>
<g transform="translate(179,433)"><path d="M8 -12.500 V12.500 L-7.500 6 V-6.500 Z" fill="#bfe3f5" stroke="#3f8ec0" stroke-width="1.200"/><text x="-9.500" y="4" font-family="Liberation Sans" font-weight="bold" font-size="11.500" fill="#111" stroke="#111" stroke-width=".4" textLength="17" lengthAdjust="spacingAndGlyphs">YZ</text></g>
<g transform="translate(239,433)"><path d="M-8 -12.500 V12.500 L7.500 6 V-6.500 Z" fill="#bfe3f5" stroke="#3f8ec0" stroke-width="1.200"/><text x="-8" y="4" font-family="Liberation Sans" font-weight="bold" font-size="11.500" fill="#111" stroke="#111" stroke-width=".4" textLength="17" lengthAdjust="spacingAndGlyphs">ZX</text></g>
<path d="M77 460.500 L82 466 L77 471.500" fill="none" stroke="#3d8cbf" stroke-width="1.700"/>
<g transform="translate(110,500.500)"><path d="M-8.500 -7 L9 -10.500 L10 6 L-7 12.500 Z" fill="#3f8dbd" stroke="#1f5f88" stroke-width="1"/><path d="M-7.500 -13 L-3.500 -13.500 L-3 -4 L-6 2 L-8 -3 Z" fill="#3f8dbd" stroke="#1f5f88" stroke-width="1"/><path d="M-13 -6.500 L-1 -9 L-0.500 -6 L-12 -3 Z" fill="#3f8dbd" stroke="#1f5f88" stroke-width="1"/><path d="M-4 0 L4 -3.500 L11 -0.500 V6 L4 10 L-1 8 L-4 10.500 Z" fill="#ececec" stroke="#666" stroke-width="1"/><circle cx="8" cy="6.500" r="4.200" fill="#f2f2f2" stroke="#444" stroke-width="1.300"/><path d="M5.500 7.500 L10.500 5.500" stroke="#444" stroke-width="1.200"/></g>
<path d="M77.500 518 V692" stroke="#4c9bc9" stroke-width="1.800"/>
<rect x="73" y="693" width="9.500" height="28.500" rx="3" fill="#3a9bd9"/>
<use href="#sk" x="140" y="534.5"/>
<use href="#sk" x="140" y="603.5"/>
<use href="#sk" x="140" y="672.5"/>
<use href="#extr" x="140" y="569.5"/>
<use href="#extr" x="140" y="638.5"/>
<use href="#extr" x="140" y="707.5"/>
</svg>
<div id="abar"></div>
<div class="atab on" id="at0" style="left:536px;width:88px;border-radius:3px 0 0 0;"><span>Standard</span></div>
<div class="atab" id="at1" style="left:624px;width:72px;"><span>Sketch</span></div>
<div class="atab" id="at2" style="left:696px;width:85px;"><span>Features</span></div>
<div class="atab" id="at3" style="left:781px;width:84px;"><span>Surfaces</span></div>
<div class="atab" id="at4" style="left:865px;width:92px;"><span>Assembly</span></div>
<div class="atab" id="at5" style="left:957px;width:144px;"><span>Design Guidance</span></div>
<div class="atab" id="at6" style="left:1101px;width:61px;"><span>Tools</span></div>
<div class="atab" id="at7" style="left:1162px;width:83px;"><span>Lifecycle</span></div>
<div class="atab" id="at8" style="left:1245px;width:109px;"><span>Marketplace</span></div>
<div class="atab on" id="at9" style="left:1354px;width:58px;border-radius:0 5px 0 0;"><span>View</span></div>
<svg width="1160" height="100" viewBox="380 860 1160 100" style="left:380px;top:860px;z-index:3">
<defs>
<linearGradient id="bl" x1="0" y1="0" x2="0" y2="1"><stop offset="0" stop-color="#86cbec"/><stop offset="1" stop-color="#2b7cae"/></linearGradient>
<linearGradient id="bl2" x1="0" y1="0" x2="1" y2="1"><stop offset="0" stop-color="#7cc4e8"/><stop offset="1" stop-color="#2a78a8"/></linearGradient>
<linearGradient id="gr" x1="0" y1="0" x2="1" y2="1"><stop offset="0" stop-color="#ffffff"/><stop offset="1" stop-color="#b9b9b9"/></linearGradient>
<linearGradient id="gr2" x1="0" y1="0" x2="0" y2="1"><stop offset="0" stop-color="#fdfdfd"/><stop offset="1" stop-color="#c6c6c6"/></linearGradient>
<radialGradient id="lens" cx="40%" cy="35%" r="70%"><stop offset="0" stop-color="#ffffff"/><stop offset="1" stop-color="#cfd6da"/></radialGradient>
<radialGradient id="ball" cx="40%" cy="35%" r="70%"><stop offset="0" stop-color="#8ed0ef"/><stop offset="1" stop-color="#1f6d9c"/></radialGradient>
<pattern id="hatch" width="4" height="4" patternUnits="userSpaceOnUse" patternTransform="rotate(-35)"><rect width="4" height="4" fill="#7cc6ea"/><rect width="4" height="1.600" fill="#2a78a8"/></pattern>
<path id="corner" d="M0 0 V-5 L-5 0 Z" fill="#222"/>
<g id="step"><path d="M-15.700 -5.700 L-6.300 -9.100 V1.100 L4.400 6.800 L4.100 16.700 L-15.700 8.900 Z" fill="url(#gr2)"/><path d="M-15.700 -5.700 L-4.500 -16.400 Q-3.700 -17.100 -2.500 -16.900 L5.900 -15.800 L-6.300 -9.100 Z" fill="#fdfdfd"/><path d="M-6.300 -9.100 L5.900 -15.800 V-5.100 L-6.300 1.100 Z" fill="#e6e6e6"/><path d="M-6.300 1.100 L5.900 -5.100 L16.600 -2.500 L4.400 6.800 Z" fill="#fbfbfb"/><path d="M4.400 6.800 L16.600 -2.500 L16.900 4.800 L4.100 16.700 Z" fill="#e9e9e9"/><path d="M-15.700 -5.700 L-6.300 -9.100 L5.900 -15.800 M-6.300 -9.100 V1.100 L5.900 -5.100 M-6.300 1.100 L4.400 6.800 L16.600 -2.500 M4.400 6.800 L4.100 16.700" fill="none" stroke="#8a8a8a" stroke-width="1.200"/><path d="M-15.700 -5.700 L-4.500 -16.400 Q-3.700 -17.100 -2.500 -16.900 L5.900 -15.800 V-5.100 L16.600 -2.500 L16.900 4.800 L4.100 16.700 L-15.700 8.900 Z" fill="none" stroke="#3d3d3d" stroke-width="1.700" stroke-linejoin="round"/></g>
<g id="step2"><path d="M-15.700 -11.900 L-6.300 -9.800 V1.100 L4.100 6.300 L5.200 17 L-15.700 8.400 Z" fill="url(#gr2)"/><path d="M-15.700 -11.900 L-4.700 -17.900 L6 -16.500 L-6.300 -9.800 Z" fill="#fdfdfd"/><path d="M-6.300 -9.800 L6 -16.500 V-4.500 L-6.300 1.100 Z" fill="#e6e6e6"/><path d="M-6.300 1.100 L6 -4.500 L14.500 -4.100 L4.100 6.300 Z" fill="#fbfbfb"/><path d="M4.100 6.300 L14.500 -4.100 L16.600 4.800 L5.200 17 Z" fill="#e9e9e9"/><path d="M-15.700 -11.900 L-6.300 -9.800 L6 -16.500 M-6.300 -9.800 V1.100 L6 -4.500 M-6.300 1.100 L4.100 6.300 L14.500 -4.100 M4.100 6.300 L5.200 17" fill="none" stroke="#8a8a8a" stroke-width="1.200"/><path d="M-15.700 -11.900 L-4.700 -17.900 L6 -16.500 V-4.500 L14.500 -4.100 L16.600 4.800 L5.200 17 L-15.700 8.400 Z" fill="none" stroke="#3d3d3d" stroke-width="1.700" stroke-linejoin="round"/></g>
<linearGradient id="grg" x1="0" y1="0" x2="0" y2="1"><stop offset="0" stop-color="#ffffff"/><stop offset="1" stop-color="#e2e2e2"/></linearGradient>
<linearGradient id="arg" x1="0" y1="0" x2="1" y2="1"><stop offset="0" stop-color="#b5b5b5"/><stop offset="1" stop-color="#5c5c5c"/></linearGradient>
<g id="gearp"><path d="M-1.300 -7 H1.300 L1.800 -5 L3.300 -4.400 L5 -5.500 L6.800 -3.700 L5.700 -2 L6.300 -0.600 L8.300 -0.200 V2.400 L6.300 2.800 L5.700 4.200 L6.800 5.900 L5 7.700 L3.300 6.600 L1.800 7.200 L1.300 9.200 H-1.300 L-1.800 7.200 L-3.300 6.600 L-5 7.700 L-6.800 5.900 L-5.700 4.200 L-6.300 2.800 L-8.300 2.400 V-0.200 L-6.300 -0.600 L-5.700 -2 L-6.800 -3.700 L-5 -5.500 L-3.300 -4.400 L-1.800 -5 Z"/></g>
</defs>
<path d="M393 905 L399 910.500 L405 905" fill="none" stroke="#555" stroke-width="1.600"/>
<path d="M411.500 894 V958" stroke="#c4c4c4" stroke-width="1.200"/>
<path d="M632.7 901.500 V948" stroke="#cfcfcf" stroke-width="1.400"/>
<path d="M747.5 901.500 V948" stroke="#cfcfcf" stroke-width="1.400"/>
<path d="M863.2 901.500 V948" stroke="#cfcfcf" stroke-width="1.400"/>
<path d="M1199.5 901.500 V948" stroke="#cfcfcf" stroke-width="1.400"/>
<path d="M1367.4 901.500 V948" stroke="#cfcfcf" stroke-width="1.400"/>
<path d="M925.700 894 V958" stroke="#9f9f9f" stroke-width="1.400"/>
<rect x="1040.5" y="901.500" width="44.5" height="44.500" rx="4.500" fill="#d2e7f5" stroke="#4b9fd3" stroke-width="1.200"/>
<rect x="1146" y="901.500" width="44.700000000000045" height="44.500" rx="4.500" fill="#d2e7f5" stroke="#4b9fd3" stroke-width="1.200"/>
<rect x="1482" y="901.500" width="45" height="44.500" rx="4.500" fill="#d2e7f5" stroke="#4b9fd3" stroke-width="1.200"/>
<g transform="translate(444,924.500)"><use href="#step"/><circle cx="-13.600" cy="-12.500" r="8" fill="#cfeaf8" opacity=".7"/><g transform="translate(-13.600,-12.500)" stroke="#2477ab" stroke-width="2.300"><path d="M0 -6.500 V6.500 M-6.500 0 H6.500 M-4.600 -4.600 L4.600 4.600 M-4.600 4.600 L4.600 -4.600"/></g><circle cx="-13.600" cy="-12.500" r="3.200" fill="#2477ab"/><use href="#corner" x="17" y="18"/></g>
<g transform="translate(494,925)"><use href="#step2"/><path d="M3.100 -19.200 L17.700 -19.200 L13.500 -14.500 C18.500 -11 20 -4 16.600 4.300 L14 4.300 C15.500 -2 13.500 -6.500 9.500 -10.500 L3.100 -5.600 Z" fill="url(#arg)" stroke="#333" stroke-width="1.400" stroke-linejoin="round"/></g>
<g transform="translate(548.500,924)"><path d="M-18.300 -17.700 H18.300 V17.700 H-14.300 L-18.300 13.700 Z" fill="url(#bl)" stroke="#1d5a82" stroke-width="1.500" stroke-linejoin="round"/><rect x="-12.500" y="-17.700" width="24.500" height="17.300" fill="#f6f6f6" stroke="#2c5f80" stroke-width="1.200"/><path d="M-8 -13.500 H8 M-8 -9.800 H8 M-8 -6.100 H8 M-8 -2.600 H8" stroke="#9c9c9c" stroke-width="1.500"/><path d="M-8.700 4.800 H9.700 V17.700 H-8.700 Z" fill="#6a6a6a" stroke="#3f4f5a" stroke-width=".8"/><rect x="-5.300" y="7.500" width="5.200" height="8.600" fill="#62aedb" stroke="#24648f" stroke-width=".9"/><path d="M8.500 18.400 L19 7.900 V18.400 Z" fill="#f1f1f1"/><path d="M11.500 18.400 L19 10.900 V18.400 Z" fill="#222"/><path d="M8.800 17.800 L18.600 8" stroke="#bfe2f4" stroke-width="1.500"/></g>
<g transform="translate(601.600,924.200)"><g fill="url(#bl2)" stroke="#1f6590" stroke-width="1.400" stroke-linejoin="round"><path d="M-2.100 -17.200 A17.300 17.300 0 0 0 -14.300 -9.700 L-17.500 -12.900 L-17.300 -2.100 L-6.700 -2.100 L-7.850 -3.250 A8.500 8.500 0 0 1 -2.100 -8.200 Z" transform="rotate(0)"/><path d="M-2.100 -17.200 A17.300 17.300 0 0 0 -14.300 -9.700 L-17.500 -12.900 L-17.300 -2.100 L-6.700 -2.100 L-7.850 -3.250 A8.500 8.500 0 0 1 -2.100 -8.200 Z" transform="rotate(-90)"/><path d="M-2.100 -17.200 A17.300 17.300 0 0 0 -14.300 -9.700 L-17.500 -12.900 L-17.300 -2.100 L-6.700 -2.100 L-7.850 -3.250 A8.500 8.500 0 0 1 -2.100 -8.200 Z" transform="rotate(-180)"/><path d="M-2.100 -17.200 A17.300 17.300 0 0 0 -14.300 -9.700 L-17.500 -12.900 L-17.300 -2.100 L-6.700 -2.100 L-7.850 -3.250 A8.500 8.500 0 0 1 -2.100 -8.200 Z" transform="rotate(-270)"/></g><use href="#corner" x="18.500" y="18.500"/></g>
<g transform="translate(664,924)"><rect x="-4.500" y="-17.800" width="22.300" height="18.300" fill="#f3f3f3" stroke="#2a2a2a" stroke-width="1.500"/><path d="M-0.500 -13.500 H3.500 V-11.500 H13.500 V-7.800 H-0.500 Z" fill="#858585" stroke="#3c3c3c" stroke-width=".9"/><rect x="2" y="-3.500" width="9.500" height="4" fill="#5aa9d6" stroke="#1d5478" stroke-width="1"/>
<rect x="-17.500" y="-0.300" width="22" height="18.300" fill="#f3f3f3" stroke="#2a2a2a" stroke-width="1.500"/><path d="M-13.500 3.300 H-9.500 V5.300 H0.500 V9.300 H-13.500 Z" fill="#858585" stroke="#3c3c3c" stroke-width=".9"/><rect x="-15.200" y="13.300" width="17.400" height="4" fill="#5aa9d6" stroke="#1d5478" stroke-width="1"/>
<path d="M-17.500 -4.500 C-17.500 -10 -14 -12 -11 -12 V-15 L-6.500 -10.500 L-11 -6 V-9 C-13.500 -9 -15.500 -7.500 -15.500 -4.500 Z" fill="#333"/><path d="M17.800 5.500 C17.800 11 14.300 13 11.300 13 V16 L6.800 11.500 L11.300 7 V10 C13.800 10 15.800 8.500 15.800 5.500 Z" fill="#333"/></g>
<g transform="translate(716.500,924) scale(2.150) translate(0,-1.100)"><use href="#gearp" fill="url(#grg)" stroke="#5e5e5e" stroke-width=".8" stroke-linejoin="round"/><circle cx="0" cy="1.100" r="3" fill="#f1f1f1" stroke="#5e5e5e" stroke-width=".75"/></g>
<g transform="translate(779.500,924) scale(1.070,1)"><path d="M-16 -14.500 L-16 -1.500 L-3 -1.500 L-6.500 -5.500 C-1 -8.500 6 -5 6.500 1.500 C7 7 4 10.500 1.500 12.500 L6 17.500 C12 13.500 15.500 7.500 14.500 0 C13 -11 1 -17 -11 -10.500 Z" fill="url(#bl)" stroke="#1d5478" stroke-width="1.500" stroke-linejoin="round"/></g>
<g transform="translate(831.500,924) scale(-1.070,1)" opacity=".75"><path d="M-16 -14.500 L-16 -1.500 L-3 -1.500 L-6.500 -5.500 C-1 -8.500 6 -5 6.500 1.500 C7 7 4 10.500 1.500 12.500 L6 17.500 C12 13.500 15.500 7.500 14.500 0 C13 -11 1 -17 -11 -10.500 Z" fill="#a6cde2" stroke="#6f9db8" stroke-width="1.300" stroke-linejoin="round"/></g>
<g transform="translate(894.200,923.500)"><circle r="17.300" fill="url(#gr)" stroke="#6e6e6e" stroke-width="1.500"/><text x="-8.300" y="10.500" font-family="Liberation Sans" font-weight="bold" font-size="29" fill="#2f7dab">?</text><use href="#corner" x="19" y="18.300"/></g>
<g transform="translate(956.500,924)"><path d="M-6.900 2.750 L-2.300 6.900 L-12.200 17.300 Q-14.500 19 -17 16.800 L-18.300 15.300 Q-20 13 -18 11.200 Z" fill="url(#bl)" stroke="#1d4f6e" stroke-width="1.400" stroke-linejoin="round"/><circle cx="4.750" cy="-4.750" r="11.500" fill="url(#lens)" stroke="#5c5c5c" stroke-width="2.400"/><rect x="0.950" y="-8.550" width="7.600" height="7.600" fill="#dfe6ea"/><path d="M4.750 -13.500 L8 -9.800 H1.500 Z M4.750 4 L8 0.300 H1.500 Z M-4 -4.750 L-0.300 -8 V-1.500 Z M13.500 -4.750 L9.800 -8 V-1.500 Z" fill="#2e2e2e"/></g>
<g transform="translate(1009.500,924)"><path d="M0 -17.500 L6.500 -10 H2.600 V-2.600 H10 V-6.500 L17.500 0 L10 6.500 V2.600 H2.600 V10 H6.500 L0 17.500 L-6.500 10 H-2.600 V2.600 H-10 V6.500 L-17.500 0 L-10 -6.500 V-2.600 H-2.600 V-10 H-6.500 Z" fill="url(#bl)" stroke="#1d5478" stroke-width="1.500" stroke-linejoin="round"/></g>
<g transform="translate(1062.500,924)"><circle cx="4.500" cy="8.300" r="9.700" fill="url(#ball)" stroke="#1d5f8a" stroke-width="1"/><path d="M-17.700 -9 C-12 -10.500 -3 -11.500 3.500 -9.500 C9 -7.500 13.500 -3 15 1.500 L13.800 3.200 C10 1.500 7 -0.500 5.500 -1.500 C7.500 1 8.800 3.500 8.300 6 C4.500 5 1.500 2.500 -1.500 -0.800 C-4.500 -1.800 -8.500 -2.200 -11.500 -2.200 L-17.300 -2.500 Z" fill="#fff" stroke="#1e1e1e" stroke-width="1.600" stroke-linejoin="round"/><path d="M-3 -2.500 C-2 -6 3 -6.500 6 -4 C8.500 -2 10 0 11 2" fill="none" stroke="#1e1e1e" stroke-width="2.400" stroke-linecap="round"/></g>
<g transform="translate(1114,924)"><path d="M-13 -15.500 V4.500" stroke="#222" stroke-width="1.900"/><path d="M-13 -18.500 L-9.300 -13 H-16.700 Z M-13 7.500 L-9.300 2 H-16.700 Z" fill="#222"/><path d="M-5.400 3.750 L-0.800 7.900 L-10.700 18.300 Q-13 20 -15.500 17.800 L-16.800 16.300 Q-18.500 14 -16.500 12.200 Z" fill="url(#bl)" stroke="#1d4f6e" stroke-width="1.400" stroke-linejoin="round"/><circle cx="6.500" cy="-5" r="11.700" fill="url(#lens)" stroke="#666" stroke-width="2.200"/></g>
<g transform="translate(1167.500,924)"><path d="M-16 -9 L-2 -17 L15.500 -9.500 V9 L1.500 17.500 L-16 9.500 Z" fill="url(#bl2)" stroke="#1d5f8a" stroke-width="1.500" stroke-linejoin="round"/><path d="M-16 -9 L1.500 -1.500 L15.500 -9.500 L-2 -17 Z" fill="#8fd0ef" stroke="#1d5f8a" stroke-width="1.300" stroke-linejoin="round"/><path d="M1.500 -1.500 V17.500" stroke="#1d5f8a" stroke-width="1.300"/><use href="#corner" x="20" y="19"/></g>
<g transform="translate(1231,920.500)"><path d="M-18.500 0.500 C-10 -15 9 -15 18.500 0.500 C9 14 -10 14 -18.500 0.500 Z" fill="#fafafa" stroke="#5a5a5a" stroke-width="2.300"/><circle cx="-1" cy="-2" r="8.600" fill="#3a3a3a"/><circle cx="-1" cy="-2" r="4.500" fill="#1e1e1e"/><circle cx="1.200" cy="-4.500" r="2.300" fill="#fff"/><path d="M1 3.500 H18.500 L12.800 10.500 V21 H7.500 V10.500 Z" fill="url(#bl)" stroke="#246e9c" stroke-width="1.200" stroke-linejoin="round"/></g>
<g transform="translate(1284,924)"><path d="M-14 -13 V10 C-14 16.500 9 16.500 9 10 V-13 Z" fill="url(#bl2)" stroke="#1d5f8a" stroke-width="1.400"/><ellipse cx="-2.500" cy="-13" rx="11.500" ry="4.600" fill="#8fd0ef" stroke="#1d5f8a" stroke-width="1.400"/><g transform="translate(9,10)"><use href="#gearp" fill="#333" transform="translate(0,-1) scale(.95)"/><circle r="2.200" fill="#8fd0ef"/></g></g>
<g transform="translate(1337,923)"><path d="M0 -17 L10 -13 L16 -3 L12 9 L0 14 Z" fill="#d3ecf9" stroke="#1d5f8a" stroke-width="1.400" stroke-linejoin="round"/><path d="M0 -17 L-10 -13 L-16 -3 L-12 9 L0 14 Z" fill="url(#bl2)" stroke="#1d5f8a" stroke-width="1.400" stroke-linejoin="round"/><path d="M0 -17 L-8 -3 L0 14 M-10 -13 L-8 -3 L-16 -3 M-8 -3 L-12 9" fill="none" stroke="#1d5f8a" stroke-width="1.100"/><path d="M0 -17 L8 -3 L0 14 M10 -13 L0 -8 L8 -3 L16 -3 M8 -3 L0 3 L12 9 M0 -8 L10 -13 M0 3 L8 -3 M0 -17 V14" fill="none" stroke="#1f6a99" stroke-width="1.600"/><g transform="translate(10.500,11.500)"><use href="#gearp" fill="#333" transform="translate(0,-1) scale(.95)"/><circle r="2.500" fill="#f1f1f1"/></g></g>
<g transform="translate(1398,924.500)"><path d="M-18.800 -6 C-15 -20.500 13 -20.500 18.800 -9 V8 C14 12 10 13.500 6.500 14.500 V6 C3 3 -3 3 -6.500 7 V15.500 C-10 17 -15 18 -18.800 16 Z" fill="#fafafa" stroke="#333" stroke-width="1.600" stroke-linejoin="round"/><path d="M-6.500 -8 C-3 -11.500 3 -11.500 6.500 -9 V6 C3 3 -3 3 -6.500 7 Z" fill="url(#gr)" stroke="#9a9a9a" stroke-width=".6"/><path d="M-17.300 -4.500 L-6.500 -8 V15.500 C-10 17 -14 17.500 -17.300 16 Z" fill="url(#hatch)" stroke="#1d5478" stroke-width="1.400" stroke-linejoin="round"/><path d="M6.500 -9 L17.800 -10 V8 C14 11.500 10 13.500 6.500 14.500 Z" fill="url(#hatch)" stroke="#1d5478" stroke-width="1.400" stroke-linejoin="round"/><use href="#corner" x="19.500" y="18"/></g>
<g transform="translate(1451,924)"><rect x="-17" y="-17" width="31" height="25" rx="1.500" fill="#f7f7f7" stroke="#444" stroke-width="1.500"/><circle cx="-9" cy="-9.500" r="3.800" fill="#f1f1f1" stroke="#aaa" stroke-width="1.300"/><circle cx="-9" cy="1.500" r="4" fill="#3f93c4" stroke="#246e9c" stroke-width="1"/><path d="M2 -9 C2 -12.500 5.500 -12.500 5.500 -9 V-2 L8 -3.500 L11 -2.500 L14 -1.500 C16.500 -0.500 17.500 1 17.500 4 V11 L15.500 17 H7.500 L4 11 L-2 3.500 C-1 1.500 1 2 2 3 Z" fill="url(#gr)" stroke="#555" stroke-width="1.300" stroke-linejoin="round"/><path d="M8 -3.500 V2 M11 -2.500 V2.500 M14 -1.500 V3" stroke="#888" stroke-width=".9"/></g>
<g transform="translate(1504.500,924)"><rect x="-18" y="-12.500" width="36" height="25" rx="2" fill="#f5f5f5" stroke="#1d5070" stroke-width="1.600"/><path d="M5 -12.500 H16 A2 2 0 0 1 18 -10.500 V10.500 A2 2 0 0 1 16 12.500 H5 Z" fill="url(#bl)" stroke="#1d5070" stroke-width="1.200"/><path d="M8 -4 L13 0.500 L8 5 Z" fill="#173f5a"/><g transform="translate(-6.500,0) scale(.580)"><use href="#step"/></g></g>
<path d="M537 865 H546.500 L537 874.500 Z" fill="#2f86c0"/>
</svg>
<div id="dlbar"></div>
<div class="abs" id="dlname" style="left:65px;top:984px;font-size:15.500px;line-height:22px;color:#3c4043;white-space:nowrap;letter-spacing:0.17px">IMG-7363.jpg</div>
<div class="abs" style="left:1775.5px;top:974px;width:98.5px;height:42px;border:1px solid #d6d9de;border-radius:5px;background:#fff"></div>
<div class="abs" id="showall" style="left:1796px;top:983px;font-size:15.500px;line-height:22px;color:#3a6bb6;white-space:nowrap;letter-spacing:-0.2px">Show all</div>
<svg width="1920" height="70" viewBox="0 960 1920 70" style="left:0;top:960px">
 <path d="M31.500 986.500 H39.500 L43 990 V1002 H31.500 Z" fill="#fff" stroke="#7a8a99" stroke-width="1"/>
 <path d="M39.500 986.500 V990 H43" fill="none" stroke="#7a8a99" stroke-width="1"/>
 <rect x="33.500" y="992" width="7.500" height="7.500" fill="#2f7fd1"/><path d="M33.500 998 L36.500 995 L41 999.500 H33.500Z" fill="#8fc4ef"/>
 <path d="M276.500 997 L282 991.500 L287.500 997" fill="none" stroke="#444" stroke-width="1.700"/>
 <path d="M313.500 969 V1022" stroke="#d0d0d0" stroke-width="1"/>
 <path d="M1890.500 988.500 L1901.500 999.500 M1901.500 988.500 L1890.500 999.500" stroke="#444" stroke-width="1.900"/>
</svg>

<div id="taskbar"></div>
<div class="abs" style="left:1172px;top:1030px;width:62px;height:50px;background:rgba(255,255,255,.5)"></div>
<div class="abs" style="left:1296px;top:1030px;width:61px;height:50px;background:#f6b277"></div>
<div id="tsearch"><span id="tst">Type here to search</span></div>
<div class="tk" id="temp" style="left:1440.500px;top:1044px;font-size:18.500px;line-height:24px;letter-spacing:-0.8px">31°F</div>
<div class="tk" id="clk1" style="left:1772px;top:1032px;width:80px;text-align:center;font-size:15.500px;line-height:22px;letter-spacing:-0.35px">4:30 AM</div>
<div class="tk" id="clk2" style="left:1772px;top:1055px;width:80px;text-align:center;font-size:15.500px;line-height:22px;letter-spacing:-0.35px">2/9/2022</div>
<svg width="1920" height="50" viewBox="0 1030 1920 50" style="left:0;top:1030px">
 <!-- underlines -->
 <g fill="#5f8278"><rect x="681" y="1077" width="40" height="3"/><rect x="991" y="1077" width="51" height="3"/><rect x="1053" y="1077" width="51" height="3"/><rect x="1115" y="1077" width="51" height="3"/><rect x="1172" y="1077" width="61" height="3"/><rect x="1239" y="1077" width="51" height="3"/></g>
 <rect x="721" y="1077" width="11" height="3" fill="#a5b5b0"/>
 <rect x="1296" y="1077" width="61" height="3" fill="#f2690e"/>
 <!-- start -->
 <g fill="#0a0a0a"><path d="M19.800 1048.200 L28.600 1047 V1054.500 H19.800 Z"/><path d="M29.800 1046.800 L40.400 1045.300 V1054.500 H29.800 Z"/><path d="M19.800 1055.600 H28.600 V1063.200 L19.800 1062 Z"/><path d="M29.800 1055.600 H40.400 V1064.900 L29.800 1063.400 Z"/></g>
 <!-- search mag -->
 <circle cx="88.500" cy="1051.500" r="6.300" fill="none" stroke="#222" stroke-width="1.600"/><path d="M84 1056.500 L76.500 1064" stroke="#222" stroke-width="1.800"/>
 <!-- cortana -->
 <circle cx="520" cy="1055" r="8" fill="none" stroke="#111" stroke-width="2.600"/>
 <!-- task view -->
 <g fill="none" stroke="#111" stroke-width="1.400"><rect x="571.500" y="1050" width="11" height="9.500"/><path d="M570 1046 V1048 M584 1046 V1048 M570 1046 H584 M570 1064 V1062 M584 1064 V1062 M570 1064 H584 M588.500 1045.500 V1050 M588.500 1058 V1064"/></g><rect x="587" y="1052" width="3" height="3.500" fill="#111"/>
 <!-- gear -->
 <g transform="translate(643,1055)"><circle r="7" fill="none" stroke="#3a4a3a" stroke-width="3.600"/><g stroke="#3a4a3a" stroke-width="3.800"><path d="M0 -11.500 V-7 M0 11.500 V7 M-11.500 0 H-7 M11.500 0 H7 M-8.100 -8.100 L-5 -5 M8.100 8.100 L5 5 M-8.100 8.100 L-5 5 M8.100 -8.100 L5 -5"/></g></g>
 <!-- explorer -->
 <g transform="translate(705,1055)"><path d="M-13 -11.500 H-3 L-1 -9 H13 V9 H-13 Z" fill="#e9a83a"/><rect x="-13" y="-8" width="26" height="17" rx="1" fill="#fbd567"/><path d="M-8 10 V2 H8 V10 H4 V5.500 H-4 V10 Z" fill="#3a8fd6"/></g>
 <!-- store -->
 <g transform="translate(767.500,1056)"><path d="M-7 -8 C-7 -15 7 -15 7 -8" fill="none" stroke="#35a6d8" stroke-width="2.200"/><rect x="-14" y="-9.500" width="28" height="23" rx="3" fill="#1d4f8c"/><rect x="-5.500" y="-4" width="5" height="5" fill="#f25022"/><rect x="0.500" y="-4" width="5" height="5" fill="#7fba00"/><rect x="-5.500" y="2" width="5" height="5" fill="#00a4ef"/><rect x="0.500" y="2" width="5" height="5" fill="#ffb900"/></g>
 <!-- mail -->
 <g transform="translate(830,1055.500)"><path d="M-15 -5 L0 -14.500 L15 -5 Z" fill="#1266b0"/><rect x="-15" y="-5" width="30" height="18.500" fill="#2fa3e6"/><path d="M-15 -5 L0 5 L15 -5 Z" fill="#e9f4fb"/><path d="M-15 13.500 L0 3.500 L15 13.500 Z" fill="#1e8fd8"/></g>
 <!-- kicad -->
 <g transform="translate(892,1055)"><rect x="-14" y="-14" width="28" height="28" rx="4" fill="#2a3fb5"/><text x="-11" y="8" font-family="Liberation Sans" font-weight="bold" font-size="21" fill="#fff" textLength="19" lengthAdjust="spacingAndGlyphs">Ki</text><circle cx="7" cy="-7.500" r="2" fill="#e74c3c"/></g>
 <!-- creality -->
 <g transform="translate(954,1055)"><rect x="-15" y="-14.500" width="30" height="29" rx="3" fill="#111"/><text x="-13" y="1.800" font-family="Liberation Sans" font-weight="bold" font-size="5.200" fill="#eee" textLength="26" lengthAdjust="spacingAndGlyphs">CREALITY</text></g>
 <!-- fusion -->
 <g transform="translate(1016,1055)"><rect x="-15" y="-15" width="30" height="30" fill="#fbe3d3"/><path d="M-7.500 -11 H8 V-5 H-1 V-1.500 H5.500 V4 H-1 V11 H-7.500 Z" fill="#e8892c"/><path d="M-7.500 -11 L-3.500 -8 V11 H-7.500Z" fill="#b45f14"/><rect x="2" y="7.500" width="9" height="4" fill="#f2b07a"/></g>
 <!-- onenote -->
 <g transform="translate(1077.500,1055)"><rect x="-5" y="-13" width="20" height="26" rx="1.500" fill="#a43cc2"/><rect x="8" y="-13" width="7" height="8.700" fill="#c978de"/><rect x="8" y="-4.300" width="7" height="8.700" fill="#b04bd0"/><rect x="8" y="4.400" width="7" height="8.600" fill="#8e2bb0"/><rect x="-15" y="-8" width="17" height="16.500" rx="1.500" fill="#7119a0"/><text x="-11.500" y="5.800" font-family="Liberation Sans" font-weight="bold" font-size="14.500" fill="#fff">N</text></g>
 <!-- vscode -->
 <g transform="translate(1140,1055)"><path d="M7 -14.500 L15 -11 V11 L7 14.500 Z" fill="#1f9cf0"/><path d="M7 -14.500 L-13 4.500 L-9.500 7.500 L7 -5.500 Z" fill="#0d7acc"/><path d="M7 14.500 L-13 -4.500 L-9.500 -7.500 L7 5.500 Z" fill="#1789d8"/></g>
 <!-- chrome -->
 <g transform="translate(1201.500,1055)"><circle r="13.500" fill="#fff"/><path d="M0 0 L-11.700 -6.750 A13.500 13.500 0 0 1 11.700 -6.750 Z" fill="#ea4335"/><path d="M0 0 L11.700 -6.750 A13.500 13.500 0 0 1 0 13.500 Z" fill="#fbbc04"/><path d="M0 0 L0 13.500 A13.500 13.500 0 0 1 -11.700 -6.750 Z" fill="#34a853"/><path d="M-11.700 -6.750 A13.500 13.500 0 0 1 11.700 -6.750 L0 -6.750Z" fill="#ea4335"/><circle r="6.400" fill="#fff"/><circle r="5" fill="#4285f4"/></g>
 <!-- inkscape -->
 <g transform="translate(1264,1054)" fill="#111"><path d="M0 -14 L13 -1 C14 0.300 13 1.800 11.500 1.800 H7.500 L10 4.300 L6.800 5.800 L8 7.800 L3.500 8.300 L4.500 11 L2 13.500 H-3 L-4 10.500 L-2.600 8.500 L-8 8 L-6 6 L-10.500 4.500 L-7.300 1.800 H-11.500 C-13 1.800 -14 0.300 -13 -1 Z"/><path d="M-5 -5 L0 -10 L5 -5 L2.400 -3.300 L0 -5.300 L-2.400 -3.300Z" fill="#e8eee9"/></g>
 <!-- onedrive folder -->
 <g transform="translate(1327,1055)"><path d="M-14 -11 L-6 -14 V12 L-14 9 Z" fill="#f3c14e"/><rect x="-6" y="-14" width="8" height="26" fill="#fbd978"/><path d="M-1 10 C-5 10 -5.500 5 -2 4.500 C-2 0.500 3 -1 5 2 C8 0.500 11 2.500 10.500 5 C14 5.500 14 10 10.500 10 Z" fill="#2d7fd3"/></g>
 <!-- moon -->
 <path d="M1419 1043 C1427 1046 1429 1057 1422 1062.500 C1416.500 1066.500 1409 1065 1405.500 1061 C1414 1062 1421.500 1054 1419 1043 Z" fill="#f6c618"/>
 <!-- tray -->
 <path d="M1502.500 1059.500 L1510 1051.500 L1517.500 1059.500" fill="none" stroke="#222" stroke-width="1.600"/>
 <path d="M1546 1060 C1540 1060 1539.500 1053 1544.500 1052.500 C1545 1047.500 1552 1046.500 1554 1050.500 C1559 1049.500 1561.500 1055 1558 1058 C1557.500 1059.500 1556 1060 1554.500 1060 Z" fill="#8a8f8a" stroke="#333" stroke-width="1.300"/>
 <g fill="none" stroke="#333" stroke-width="1.500"><rect x="1584.500" y="1050.500" width="9.500" height="10" rx="2"/><path d="M1594 1054 L1598 1051.500 V1059.500 L1594 1057"/><path d="M1585 1047 C1588 1045 1591 1045 1594 1047 M1585 1064 C1588 1066 1591 1066 1594 1064" stroke-width="1.100"/></g>
 <g fill="none" stroke="#333" stroke-width="1.400"><path d="M1620.500 1049 L1638.500 1046.500 V1062 L1620.500 1061.500 Z"/><path d="M1626.500 1053 C1629 1050.500 1632.500 1051 1634 1053.500 M1633.500 1057.500 C1631 1060 1627.500 1059.500 1626 1057"/></g><circle cx="1635.500" cy="1061" r="4.200" fill="#2f7fd1"/>
 <g fill="none" stroke="#222" stroke-width="1.400"><rect x="1665.500" y="1051" width="13" height="9"/><path d="M1662 1049 V1053 M1660.500 1051 H1663.500 M1662 1053 V1057 H1665"/></g><rect x="1666.500" y="1052" width="3" height="7" fill="#222"/><rect x="1679" y="1053.500" width="1.500" height="4" fill="#222"/>
 <g fill="none" stroke="#333" stroke-width="1.400"><path d="M1703.500 1063 C1703.500 1054 1710 1048 1718.500 1048 M1707.500 1063 C1707.500 1056.500 1712 1052 1718.500 1052 M1711.500 1063 C1711.500 1059 1714.500 1056 1718.500 1056"/></g><circle cx="1717" cy="1061.500" r="1.800" fill="#222"/>
 <g fill="none" stroke="#222" stroke-width="1.400"><path d="M1740 1051.500 H1743.500 L1748 1047.500 V1062.500 L1743.500 1058.500 H1740 Z"/><path d="M1751 1052 C1752.500 1054 1752.500 1056 1751 1058 M1754 1049.500 C1757 1053 1757 1057 1754 1060.500 M1757 1047 C1761 1052 1761 1058 1757 1063" stroke-width="1.200"/></g>
 <!-- notifications -->
 <path d="M1869.500 1046 H1889.500 V1062 H1876 L1871.500 1066 V1062 H1869.500 Z" fill="#111"/><path d="M1873 1050.500 H1886 M1873 1054 H1886 M1873 1057.500 H1882" stroke="#dfe8e2" stroke-width="1.200"/>
 <circle cx="1888" cy="1065" r="9.500" fill="#d6dbd7" stroke="#8a8f8a" stroke-width="1.200"/><text x="1883.800" y="1070.500" font-family="Liberation Sans" font-size="15" fill="#111">5</text>
 <path d="M1914.500 1030 V1080" stroke="#b5c5ba" stroke-width="1"/>
</svg>

</body>
</html>
